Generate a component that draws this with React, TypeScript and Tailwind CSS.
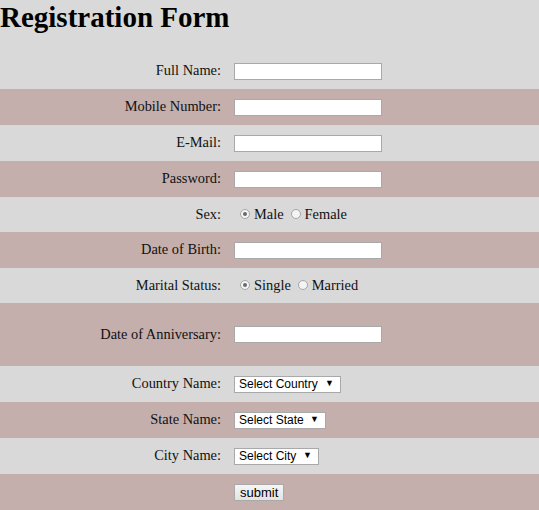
import React from "react";

const serif = { fontFamily: '"Liberation Serif", "Times New Roman", serif' };

function TextBox() {
  return <div className="w-[148px] h-[17px] bg-white border border-[#a9a9a9]" />;
}

function Radio({ checked }: { checked?: boolean }) {
  return (
    <span className="inline-flex items-center justify-center w-[10px] h-[10px] rounded-full border border-[#a6a6a6] bg-[#f4f4f4]">
      {checked && <span className="w-[4px] h-[4px] rounded-full bg-[#6a6a6a]" />}
    </span>
  );
}

function RadioGroup({ options }: { options: string[] }) {
  return (
    <div className="flex items-center pl-[6px] text-[14.4px] text-[#111]" style={serif}>
      {options.map((o, i) => (
        <span key={o} className={`flex items-center ${i > 0 ? "ml-[7px]" : ""}`}>
          <Radio checked={i === 0} />
          <span className="ml-[4px]">{o}</span>
        </span>
      ))}
    </div>
  );
}

function Select({ label, width }: { label: string; width: string }) {
  return (
    <div
      className={`${width} h-[17px] bg-white border border-[#a9a9a9] flex items-center justify-between pl-[4px] pr-[6px] text-[12px] text-black`}
      style={{ fontFamily: '"Liberation Sans", Arial, sans-serif' }}
    >
      <span>{label}</span>
      <span className="text-[9px]">▼</span>
    </div>
  );
}

function Row({
  label,
  children,
  pink,
  h = "h-[36px]",
}: {
  label: string;
  children: React.ReactNode;
  pink?: boolean;
  h?: string;
}) {
  return (
    <div
      className={`grid grid-cols-[221px_1fr] gap-x-[13px] items-center ${h} ${
        pink ? "bg-[#c4afad]" : "bg-[#d9d9d9]"
      }`}
    >
      <div className="text-right text-[14.4px] text-[#111]" style={serif}>
        {label}
      </div>
      <div className="flex items-center">{children}</div>
    </div>
  );
}

export default function App() {
  return (
    <div className="w-[539px] h-[510px] bg-[#d9d9d9] overflow-hidden">
      <div className="h-[53px]">
        <h1 className="text-[29px] font-bold text-black leading-[34px]" style={serif}>
          Registration Form
        </h1>
      </div>
      <Row label="Full Name:">
        <TextBox />
      </Row>
      <Row label="Mobile Number:" pink>
        <TextBox />
      </Row>
      <Row label="E-Mail:">
        <TextBox />
      </Row>
      <Row label="Password:" pink>
        <TextBox />
      </Row>
      <Row label="Sex:" h="h-[35px]">
        <RadioGroup options={["Male", "Female"]} />
      </Row>
      <Row label="Date of Birth:" pink>
        <TextBox />
      </Row>
      <Row label="Marital Status:" h="h-[35px]">
        <RadioGroup options={["Single", "Married"]} />
      </Row>
      <Row label="Date of Anniversary:" pink h="h-[63px]">
        <TextBox />
      </Row>
      <Row label="Country Name:">
        <Select label="Select Country" width="w-[107px]" />
      </Row>
      <Row label="State Name:" pink>
        <Select label="Select State" width="w-[92px]" />
      </Row>
      <Row label="City Name:">
        <Select label="Select City" width="w-[85px]" />
      </Row>
      <div className="grid grid-cols-[221px_1fr] gap-x-[13px] items-center h-[36px] bg-[#c4afad]">
        <div />
        <div className="flex items-center">
          <button
            className="h-[17px] px-[5px] border border-[#a9a9a9] bg-gradient-to-b from-[#f6f6f6] to-[#e3e3e3] text-[13px] leading-[15px] text-black"
            style={{ fontFamily: '"Liberation Sans", Arial, sans-serif' }}
          >
            submit
          </button>
        </div>
      </div>
    </div>
  );
}
